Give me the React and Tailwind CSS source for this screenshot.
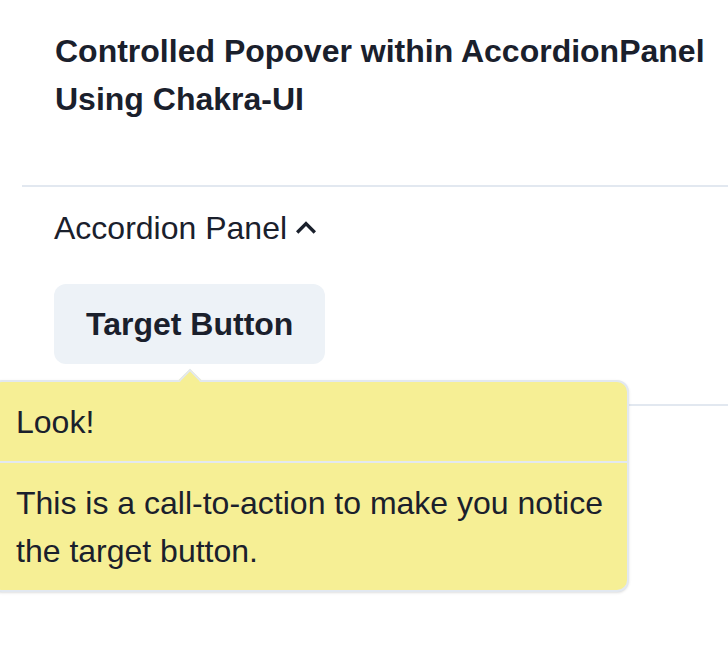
export default function App() {
  return (
    <div className="min-h-[654px] bg-white text-[#1a202c] font-['Liberation_Sans',Arial,sans-serif] overflow-hidden">
      <h1 className="pl-[55px] pt-[27px] text-[32px] leading-[48px] font-bold">
        Controlled Popover within AccordionPanel
        <br />
        Using Chakra-UI
      </h1>

      <div className="ml-[22px] mt-[62px] border-t-2 border-b-2 border-[#e2e8f0]">
        <button className="flex items-center px-[32px] pt-[17px] pb-[16px] text-[32px] leading-[48px]">
          Accordion Panel
          <svg viewBox="0 0 24 24" className="w-[40px] h-[40px] rotate-180 -ml-[1px]" fill="currentColor">
            <path d="M16.59 8.59L12 13.17 7.41 8.59 6 10l6 6 6-6z" />
          </svg>
        </button>

        <div className="px-[32px] pt-[16px] pb-[40px]">
          <div className="relative inline-block">
            <button className="h-[80px] px-[32px] rounded-[12px] bg-[#edf2f7] text-[32px] font-bold">
              Target Button
            </button>

            <div className="absolute left-[-64px] top-full mt-[16px] w-[639px] rounded-[12px] border-2 border-[#e2e8f0] bg-[#f6ef95] text-[32px] leading-[48px] shadow-sm z-10">
              <div className="absolute left-[190px] top-[-10px] w-[16px] h-[16px] rotate-45 bg-[#f6ef95] border-t-2 border-l-2 border-[#e2e8f0]" />
              <div className="relative px-[24px] pt-[16px] pb-[15px] border-b-2 border-[#e2e8f0]">Look!</div>
              <div className="relative px-[24px] pt-[16px] pb-[15px] whitespace-nowrap">
                This is a call-to-action to make you notice
                <br />
                the target button.
              </div>
            </div>
          </div>
        </div>
      </div>
    </div>
  );
}
